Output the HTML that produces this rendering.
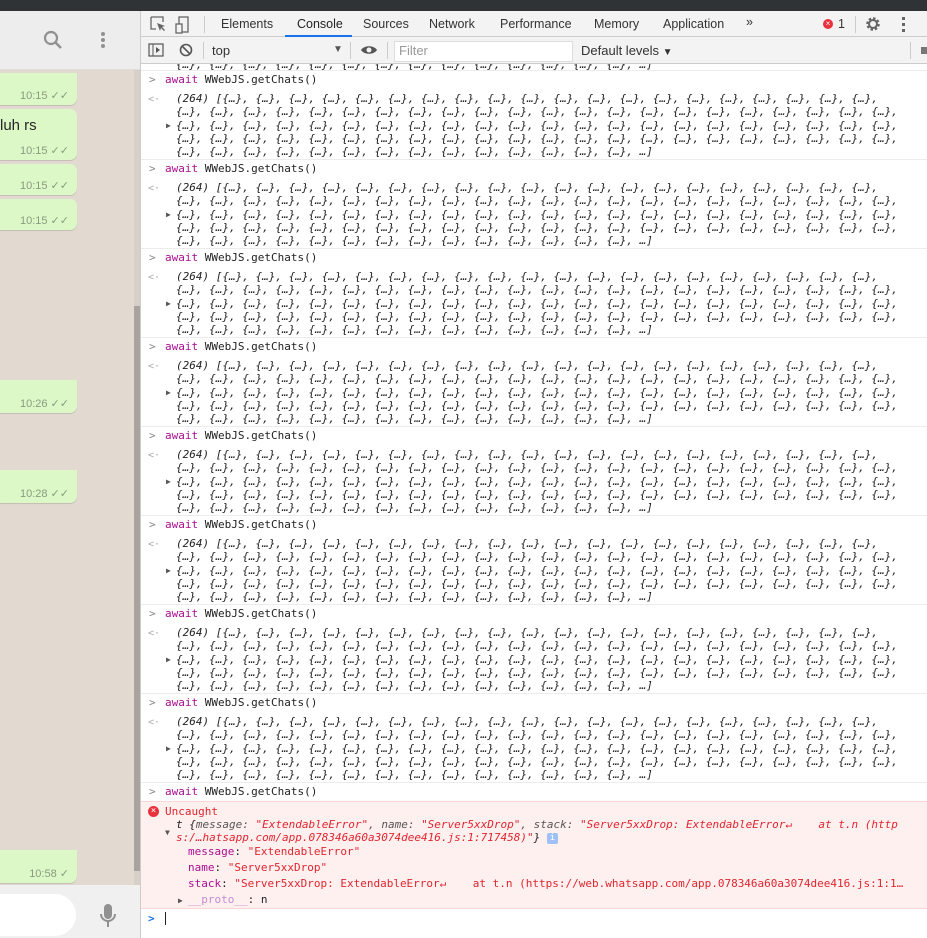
<!DOCTYPE html>
<html><head><meta charset="utf-8"><style>
*{margin:0;padding:0;box-sizing:border-box}
body{width:927px;height:938px;overflow:hidden;position:relative;background:#fff;font-family:"Liberation Sans",sans-serif}
.a{position:absolute}
.m{font-family:"DejaVu Sans Mono","Liberation Mono",monospace;font-size:11px;white-space:pre;line-height:14px;color:#222}
.blk{position:absolute;left:141px;width:786px;height:89px;border-top:1px solid #ececec}
.blk .cmd{position:absolute;left:24px;top:2px}
.kw{color:#aa0d91}
.pr{position:absolute;left:8px;color:#888}
.res{position:absolute;left:35px;top:21px;font-style:italic;line-height:13.3px;color:#222}
.lt{position:absolute;left:7px;top:22px;color:#aaa;font-size:10px}
.tri{position:absolute;left:25px;top:48px;font-size:8px;color:#555}
.tab{position:absolute;top:17px;font-size:12.5px;color:#333}
.bub{position:absolute;left:0;width:77px;background:#dcf8c6;border-radius:0 7px 7px 0;box-shadow:0 1px .5px rgba(0,0,0,.13)}
.tm{position:absolute;right:8px;bottom:3px;font-size:11px;color:#8a9a80}
</style></head><body>
<div class="a" style="left:0;top:0;width:927px;height:11px;background:#303336"></div>
<div class="a" style="left:0;top:11px;width:140px;height:59px;background:#ededed;border-bottom:1px solid #ddd"></div>
<svg class="a" style="left:42px;top:29px" width="22" height="22" viewBox="0 0 22 22"><circle cx="9" cy="9" r="6" fill="none" stroke="#919191" stroke-width="2.2"/><line x1="13.5" y1="13.5" x2="19" y2="19" stroke="#919191" stroke-width="2.5"/></svg>
<div class="a" style="left:101px;top:32px;width:4px;height:4px;border-radius:2px;background:#919191;box-shadow:0 6px 0 #919191,0 12px 0 #919191"></div>
<div class="a" style="left:0;top:70px;width:140px;height:815px;background:#e2dad1"></div>
<div class="a" style="left:134px;top:70px;width:6px;height:815px;background:#d8d0c8"></div>
<div class="a" style="left:134px;top:306px;width:6px;height:565px;background:#a8a39e"></div>
<div class="bub" style="top:73px;height:32px;border-radius:0 0 7px 0"><span class="tm">10:15 ✓✓</span></div>
<div class="bub" style="top:109px;height:51px"><span class="a" style="left:0;top:8px;font-size:15px;color:#262626">luh rs</span><span class="tm">10:15 ✓✓</span></div>
<div class="bub" style="top:164px;height:31px"><span class="tm">10:15 ✓✓</span></div>
<div class="bub" style="top:199px;height:31px"><span class="tm">10:15 ✓✓</span></div>
<div class="bub" style="top:380px;height:33px;border-radius:0 0 7px 0"><span class="tm">10:26 ✓✓</span></div>
<div class="bub" style="top:470px;height:33px;border-radius:0 0 7px 0"><span class="tm">10:28 ✓✓</span></div>
<div class="bub" style="top:850px;height:33px;border-radius:0 0 7px 0"><span class="tm">10:58 ✓</span></div>
<div class="a" style="left:0;top:885px;width:140px;height:53px;background:#f0f0f0"></div>
<div class="a" style="left:-20px;top:894px;width:96px;height:42px;background:#fff;border-radius:21px"></div>
<svg class="a" style="left:99px;top:903px" width="18" height="26" viewBox="0 0 18 26"><rect x="5" y="1" width="8" height="15" rx="4" fill="#919191"/><path d="M2 11a7 7 0 0 0 14 0" fill="none" stroke="#919191" stroke-width="2"/><line x1="9" y1="18" x2="9" y2="24" stroke="#919191" stroke-width="2"/></svg>
<div class="a" style="left:140px;top:11px;width:1px;height:927px;background:#ccc"></div>
<div class="a" style="left:141px;top:11px;width:786px;height:26px;background:#f3f3f3;border-bottom:1px solid #ccc"></div>
<svg class="a" style="left:150px;top:16px" width="42" height="18" viewBox="0 0 42 18"><path d="M1 1h12v5M1 1v12h5" fill="none" stroke="#666" stroke-width="1.3"/><path d="M7 7l8 3-3 1 3 3-1 1-3-3-1 3z" fill="#666"/><rect x="29" y="1" width="9" height="15" fill="none" stroke="#666" stroke-width="1.3"/><rect x="26" y="8" width="6" height="9" fill="#f3f3f3" stroke="#666" stroke-width="1.3"/></svg>
<div class="a" style="left:204px;top:16px;width:1px;height:17px;background:#ccc"></div>
<span class="tab" style="left:221px">Elements</span>
<span class="tab" style="left:297px;color:#222">Console</span>
<div class="a" style="left:285px;top:35px;width:67px;height:2px;background:#1a73e8"></div>
<span class="tab" style="left:363px">Sources</span>
<span class="tab" style="left:429px">Network</span>
<span class="tab" style="left:500px">Performance</span>
<span class="tab" style="left:594px">Memory</span>
<span class="tab" style="left:663px">Application</span>
<span class="tab" style="left:746px;top:15px">»</span>
<div class="a" style="left:823px;top:19px;width:10px;height:10px;border-radius:5px;background:#e8323c;color:#fff;font-size:8px;line-height:10px;text-align:center">×</div>
<span class="tab" style="left:838px">1</span>
<div class="a" style="left:855px;top:16px;width:1px;height:17px;background:#ccc"></div>
<svg class="a" style="left:865px;top:16px" width="16" height="16" viewBox="0 0 16 16"><circle cx="8" cy="8" r="5" fill="none" stroke="#666" stroke-width="3.5" stroke-dasharray="2.2 1.7"/><circle cx="8" cy="8" r="4" fill="none" stroke="#666" stroke-width="2"/></svg>
<div class="a" style="left:902px;top:17px;width:3px;height:3px;background:#666;box-shadow:0 6px 0 #666,0 12px 0 #666"></div>
<div class="a" style="left:141px;top:37px;width:786px;height:27px;background:#f3f3f3;border-bottom:1px solid #ccc"></div>
<svg class="a" style="left:148px;top:42px" width="50" height="17" viewBox="0 0 50 17"><rect x="1" y="2" width="14" height="12" fill="none" stroke="#555" stroke-width="1.2"/><line x1="5" y1="2" x2="5" y2="14" stroke="#555"/><path d="M8 5l4 3-4 3z" fill="#555"/><circle cx="38" cy="8" r="5.5" fill="none" stroke="#555" stroke-width="1.6"/><line x1="34" y1="4" x2="42" y2="12" stroke="#555" stroke-width="1.6"/></svg>
<div class="a" style="left:203px;top:42px;width:1px;height:17px;background:#ccc"></div>
<span class="a" style="left:212px;top:43px;font-size:13px;color:#333">top</span>
<span class="a" style="left:333px;top:44px;font-size:10px;color:#555">▼</span>
<div class="a" style="left:350px;top:42px;width:1px;height:17px;background:#ccc"></div>
<svg class="a" style="left:360px;top:44px" width="18" height="12" viewBox="0 0 18 12"><path d="M1 6C4 1 14 1 17 6C14 11 4 11 1 6z" fill="#555"/><circle cx="9" cy="6" r="2.5" fill="#f3f3f3"/></svg>
<div class="a" style="left:387px;top:42px;width:1px;height:17px;background:#ccc"></div>
<div class="a" style="left:394px;top:41px;width:179px;height:21px;background:#fff;border:1px solid #ddd"></div>
<span class="a" style="left:399px;top:43px;font-size:13px;color:#999">Filter</span>
<span class="a" style="left:581px;top:43px;font-size:13px;color:#333">Default levels <span style="font-size:10px">▼</span></span>
<div class="a" style="left:910px;top:42px;width:1px;height:17px;background:#ccc"></div>
<div class="a" style="left:921px;top:47px;width:6px;height:7px;background:#777"></div>
<div class="a m" style="left:176px;font-style:italic;color:#222;height:7px;overflow:hidden;top:64px;line-height:1px">{…}, {…}, {…}, {…}, {…}, {…}, {…}, {…}, {…}, {…}, {…}, {…}, {…}, {…}, …]</div>

<div class="blk m" style="top:70px"><span class="pr" style="top:2px">&gt;</span><span class="cmd"><span class="kw">await</span> WWebJS.getChats()</span><span class="lt">&lt;·</span><span class="tri">▶</span><div class="res">(264) [{…}, {…}, {…}, {…}, {…}, {…}, {…}, {…}, {…}, {…}, {…}, {…}, {…}, {…}, {…}, {…}, {…}, {…}, {…}, {…},
{…}, {…}, {…}, {…}, {…}, {…}, {…}, {…}, {…}, {…}, {…}, {…}, {…}, {…}, {…}, {…}, {…}, {…}, {…}, {…}, {…}, {…},
{…}, {…}, {…}, {…}, {…}, {…}, {…}, {…}, {…}, {…}, {…}, {…}, {…}, {…}, {…}, {…}, {…}, {…}, {…}, {…}, {…}, {…},
{…}, {…}, {…}, {…}, {…}, {…}, {…}, {…}, {…}, {…}, {…}, {…}, {…}, {…}, {…}, {…}, {…}, {…}, {…}, {…}, {…}, {…},
{…}, {…}, {…}, {…}, {…}, {…}, {…}, {…}, {…}, {…}, {…}, {…}, {…}, {…}, …]</div></div>
<div class="blk m" style="top:159px"><span class="pr" style="top:2px">&gt;</span><span class="cmd"><span class="kw">await</span> WWebJS.getChats()</span><span class="lt">&lt;·</span><span class="tri">▶</span><div class="res">(264) [{…}, {…}, {…}, {…}, {…}, {…}, {…}, {…}, {…}, {…}, {…}, {…}, {…}, {…}, {…}, {…}, {…}, {…}, {…}, {…},
{…}, {…}, {…}, {…}, {…}, {…}, {…}, {…}, {…}, {…}, {…}, {…}, {…}, {…}, {…}, {…}, {…}, {…}, {…}, {…}, {…}, {…},
{…}, {…}, {…}, {…}, {…}, {…}, {…}, {…}, {…}, {…}, {…}, {…}, {…}, {…}, {…}, {…}, {…}, {…}, {…}, {…}, {…}, {…},
{…}, {…}, {…}, {…}, {…}, {…}, {…}, {…}, {…}, {…}, {…}, {…}, {…}, {…}, {…}, {…}, {…}, {…}, {…}, {…}, {…}, {…},
{…}, {…}, {…}, {…}, {…}, {…}, {…}, {…}, {…}, {…}, {…}, {…}, {…}, {…}, …]</div></div>
<div class="blk m" style="top:248px"><span class="pr" style="top:2px">&gt;</span><span class="cmd"><span class="kw">await</span> WWebJS.getChats()</span><span class="lt">&lt;·</span><span class="tri">▶</span><div class="res">(264) [{…}, {…}, {…}, {…}, {…}, {…}, {…}, {…}, {…}, {…}, {…}, {…}, {…}, {…}, {…}, {…}, {…}, {…}, {…}, {…},
{…}, {…}, {…}, {…}, {…}, {…}, {…}, {…}, {…}, {…}, {…}, {…}, {…}, {…}, {…}, {…}, {…}, {…}, {…}, {…}, {…}, {…},
{…}, {…}, {…}, {…}, {…}, {…}, {…}, {…}, {…}, {…}, {…}, {…}, {…}, {…}, {…}, {…}, {…}, {…}, {…}, {…}, {…}, {…},
{…}, {…}, {…}, {…}, {…}, {…}, {…}, {…}, {…}, {…}, {…}, {…}, {…}, {…}, {…}, {…}, {…}, {…}, {…}, {…}, {…}, {…},
{…}, {…}, {…}, {…}, {…}, {…}, {…}, {…}, {…}, {…}, {…}, {…}, {…}, {…}, …]</div></div>
<div class="blk m" style="top:337px"><span class="pr" style="top:2px">&gt;</span><span class="cmd"><span class="kw">await</span> WWebJS.getChats()</span><span class="lt">&lt;·</span><span class="tri">▶</span><div class="res">(264) [{…}, {…}, {…}, {…}, {…}, {…}, {…}, {…}, {…}, {…}, {…}, {…}, {…}, {…}, {…}, {…}, {…}, {…}, {…}, {…},
{…}, {…}, {…}, {…}, {…}, {…}, {…}, {…}, {…}, {…}, {…}, {…}, {…}, {…}, {…}, {…}, {…}, {…}, {…}, {…}, {…}, {…},
{…}, {…}, {…}, {…}, {…}, {…}, {…}, {…}, {…}, {…}, {…}, {…}, {…}, {…}, {…}, {…}, {…}, {…}, {…}, {…}, {…}, {…},
{…}, {…}, {…}, {…}, {…}, {…}, {…}, {…}, {…}, {…}, {…}, {…}, {…}, {…}, {…}, {…}, {…}, {…}, {…}, {…}, {…}, {…},
{…}, {…}, {…}, {…}, {…}, {…}, {…}, {…}, {…}, {…}, {…}, {…}, {…}, {…}, …]</div></div>
<div class="blk m" style="top:426px"><span class="pr" style="top:2px">&gt;</span><span class="cmd"><span class="kw">await</span> WWebJS.getChats()</span><span class="lt">&lt;·</span><span class="tri">▶</span><div class="res">(264) [{…}, {…}, {…}, {…}, {…}, {…}, {…}, {…}, {…}, {…}, {…}, {…}, {…}, {…}, {…}, {…}, {…}, {…}, {…}, {…},
{…}, {…}, {…}, {…}, {…}, {…}, {…}, {…}, {…}, {…}, {…}, {…}, {…}, {…}, {…}, {…}, {…}, {…}, {…}, {…}, {…}, {…},
{…}, {…}, {…}, {…}, {…}, {…}, {…}, {…}, {…}, {…}, {…}, {…}, {…}, {…}, {…}, {…}, {…}, {…}, {…}, {…}, {…}, {…},
{…}, {…}, {…}, {…}, {…}, {…}, {…}, {…}, {…}, {…}, {…}, {…}, {…}, {…}, {…}, {…}, {…}, {…}, {…}, {…}, {…}, {…},
{…}, {…}, {…}, {…}, {…}, {…}, {…}, {…}, {…}, {…}, {…}, {…}, {…}, {…}, …]</div></div>
<div class="blk m" style="top:515px"><span class="pr" style="top:2px">&gt;</span><span class="cmd"><span class="kw">await</span> WWebJS.getChats()</span><span class="lt">&lt;·</span><span class="tri">▶</span><div class="res">(264) [{…}, {…}, {…}, {…}, {…}, {…}, {…}, {…}, {…}, {…}, {…}, {…}, {…}, {…}, {…}, {…}, {…}, {…}, {…}, {…},
{…}, {…}, {…}, {…}, {…}, {…}, {…}, {…}, {…}, {…}, {…}, {…}, {…}, {…}, {…}, {…}, {…}, {…}, {…}, {…}, {…}, {…},
{…}, {…}, {…}, {…}, {…}, {…}, {…}, {…}, {…}, {…}, {…}, {…}, {…}, {…}, {…}, {…}, {…}, {…}, {…}, {…}, {…}, {…},
{…}, {…}, {…}, {…}, {…}, {…}, {…}, {…}, {…}, {…}, {…}, {…}, {…}, {…}, {…}, {…}, {…}, {…}, {…}, {…}, {…}, {…},
{…}, {…}, {…}, {…}, {…}, {…}, {…}, {…}, {…}, {…}, {…}, {…}, {…}, {…}, …]</div></div>
<div class="blk m" style="top:604px"><span class="pr" style="top:2px">&gt;</span><span class="cmd"><span class="kw">await</span> WWebJS.getChats()</span><span class="lt">&lt;·</span><span class="tri">▶</span><div class="res">(264) [{…}, {…}, {…}, {…}, {…}, {…}, {…}, {…}, {…}, {…}, {…}, {…}, {…}, {…}, {…}, {…}, {…}, {…}, {…}, {…},
{…}, {…}, {…}, {…}, {…}, {…}, {…}, {…}, {…}, {…}, {…}, {…}, {…}, {…}, {…}, {…}, {…}, {…}, {…}, {…}, {…}, {…},
{…}, {…}, {…}, {…}, {…}, {…}, {…}, {…}, {…}, {…}, {…}, {…}, {…}, {…}, {…}, {…}, {…}, {…}, {…}, {…}, {…}, {…},
{…}, {…}, {…}, {…}, {…}, {…}, {…}, {…}, {…}, {…}, {…}, {…}, {…}, {…}, {…}, {…}, {…}, {…}, {…}, {…}, {…}, {…},
{…}, {…}, {…}, {…}, {…}, {…}, {…}, {…}, {…}, {…}, {…}, {…}, {…}, {…}, …]</div></div>
<div class="blk m" style="top:693px"><span class="pr" style="top:2px">&gt;</span><span class="cmd"><span class="kw">await</span> WWebJS.getChats()</span><span class="lt">&lt;·</span><span class="tri">▶</span><div class="res">(264) [{…}, {…}, {…}, {…}, {…}, {…}, {…}, {…}, {…}, {…}, {…}, {…}, {…}, {…}, {…}, {…}, {…}, {…}, {…}, {…},
{…}, {…}, {…}, {…}, {…}, {…}, {…}, {…}, {…}, {…}, {…}, {…}, {…}, {…}, {…}, {…}, {…}, {…}, {…}, {…}, {…}, {…},
{…}, {…}, {…}, {…}, {…}, {…}, {…}, {…}, {…}, {…}, {…}, {…}, {…}, {…}, {…}, {…}, {…}, {…}, {…}, {…}, {…}, {…},
{…}, {…}, {…}, {…}, {…}, {…}, {…}, {…}, {…}, {…}, {…}, {…}, {…}, {…}, {…}, {…}, {…}, {…}, {…}, {…}, {…}, {…},
{…}, {…}, {…}, {…}, {…}, {…}, {…}, {…}, {…}, {…}, {…}, {…}, {…}, {…}, …]</div></div>
<div class="blk m" style="top:782px;height:19px"><span class="pr" style="top:2px">&gt;</span><span class="cmd"><span class="kw">await</span> WWebJS.getChats()</span></div>
<div class="a m" style="left:141px;top:801px;width:786px;height:108px;background:#fff0f0;border-top:1px solid #ffd6d6;border-bottom:1px solid #ffd6d6;color:#e0252f">
<div class="a" style="left:7px;top:4px;width:11px;height:11px;border-radius:6px;background:#e8323c;color:#fff;font-size:9px;line-height:11px;text-align:center">×</div>
<span class="a" style="left:24px;top:3px">Uncaught</span>
<span class="a" style="left:35px;top:16px;font-style:italic"><span style="color:#222">t {</span><span style="color:#555">message: </span>"ExtendableError"<span style="color:#555">, name: </span>"Server5xxDrop"<span style="color:#555">, stack: </span>"Server5xxDrop: ExtendableError↵    at t.n (http</span>
<span class="a" style="left:24px;top:24px;font-size:8px;color:#555">▼</span>
<span class="a" style="left:35px;top:29px;font-style:italic">s:/…hatsapp.com/app.078346a60a3074dee416.js:1:717458)"<span style="color:#222">}</span></span>
<div class="a" style="left:406px;top:31px;width:11px;height:11px;background:#9fc1f5;border-radius:2px;color:#fff;font-size:9px;line-height:11px;text-align:center">i</div>
<span class="a" style="left:47px;top:43px"><span class="kw">message</span><span style="color:#222">: </span>"ExtendableError"</span>
<span class="a" style="left:47px;top:59px"><span class="kw">name</span><span style="color:#222">: </span>"Server5xxDrop"</span>
<span class="a" style="left:47px;top:75px"><span class="kw">stack</span><span style="color:#222">: </span>"Server5xxDrop: ExtendableError↵    at t.n (https://web.whatsapp.com/app.078346a60a3074dee416.js:1:1…</span>
<span class="a" style="left:37px;top:92px;font-size:8px;color:#555">▶</span>
<span class="a" style="left:47px;top:91px"><span style="color:#c58bd0">__proto__</span><span style="color:#222">: n</span></span>
</div>
<span class="a m" style="left:148px;top:912px;color:#1a73e8;font-weight:bold">&gt;</span>
<div class="a" style="left:165px;top:912px;width:1px;height:13px;background:#222"></div>
</body></html>
